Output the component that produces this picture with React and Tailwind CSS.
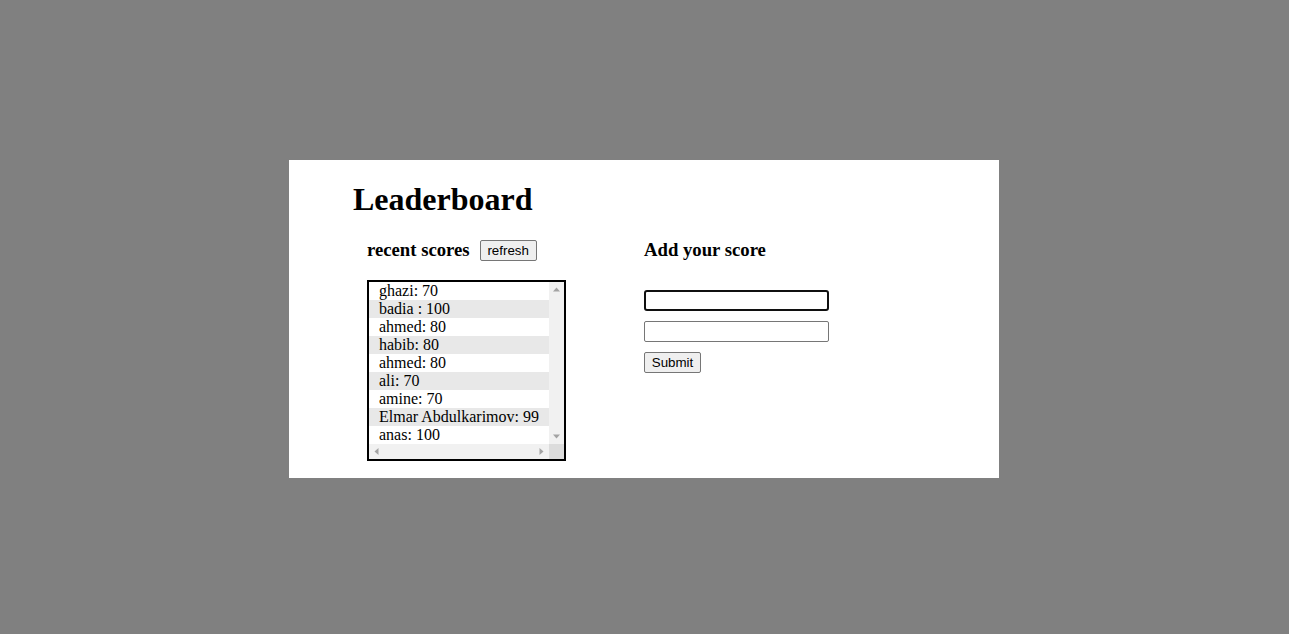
import React from 'react'

const SCORES = [
  { name: 'ghazi', score: 70 },
  { name: 'badia ', score: 100 },
  { name: 'ahmed', score: 80 },
  { name: 'habib', score: 80 },
  { name: 'ahmed', score: 80 },
  { name: 'ali', score: 70 },
  { name: 'amine', score: 70 },
  { name: 'Elmar Abdulkarimov', score: 99 },
  { name: 'anas', score: 100 }
]

// little grey scrollbar arrow, drawn in a 15x15 button
function Arrow({ dir }) {
  const pts = {
    up: '4,9.5 11,9.5 7.5,5.5',
    down: '4,5.5 11,5.5 7.5,9.5',
    left: '9.5,4 9.5,11 5.5,7.5',
    right: '5.5,4 5.5,11 9.5,7.5'
  }[dir]
  return (
    <svg width="15" height="15" viewBox="0 0 15 15" className="block shrink-0">
      <polygon points={pts} fill="#a3a3a3" />
    </svg>
  )
}

export default function App() {
  return (
    <div className="min-h-[634px] bg-[#808080] pt-[160px] font-['Liberation_Serif',serif] text-black">
      <div className="ml-[289px] w-[710px] h-[318px] bg-white pl-[64px] pt-[21px]">
        <h1 className="text-[32px] leading-[37px] font-bold">Leaderboard</h1>

        <div className="flex mt-[21px] pl-[14px]">
          {/* recent scores */}
          <div className="w-[277px] flex flex-col">
            <div className="flex items-start gap-[10px] h-[22px]">
              <h3 className="text-[18.72px] leading-[22px] font-bold">recent scores</h3>
              <button className="mt-[1px] w-[57px] h-[21px] border border-[#767676] rounded-[2px] bg-[#efefef] font-['Liberation_Sans',Arial,sans-serif] text-[13.33px] leading-[15px]">
                refresh
              </button>
            </div>
            <div className="mt-[19px] w-[199px] h-[181px] border-2 border-black grid grid-cols-[180px_15px] grid-rows-[162px_15px]">
              <div className="overflow-hidden">
                {SCORES.map((s, i) => (
                  <div
                    key={i}
                    className={`h-[18px] leading-[18px] text-[16px] pl-[10px] whitespace-nowrap ${i % 2 === 1 ? 'bg-[#e8e8e8]' : 'bg-white'}`}
                  >
                    {s.name}: {s.score}
                  </div>
                ))}
              </div>
              <div className="bg-[#f1f1f1] flex flex-col justify-between">
                <Arrow dir="up" />
                <Arrow dir="down" />
              </div>
              <div className="bg-[#f1f1f1] flex justify-between">
                <Arrow dir="left" />
                <Arrow dir="right" />
              </div>
              <div className="bg-[#dcdcdc]" />
            </div>
          </div>

          {/* add score form */}
          <div className="flex flex-col items-start">
            <h3 className="h-[22px] text-[18.72px] leading-[22px] font-bold">Add your score</h3>
            <input
              type="text"
              className="mt-[29px] w-[185px] h-[21px] border-2 border-[#101010] rounded-[3px] bg-white outline-none"
            />
            <input
              type="text"
              className="mt-[10px] w-[185px] h-[21px] border border-[#767676] rounded-[2px] bg-white outline-none"
            />
            <button className="mt-[10px] w-[57px] h-[21px] border border-[#767676] rounded-[2px] bg-[#efefef] font-['Liberation_Sans',Arial,sans-serif] text-[13.33px] leading-[15px]">
              Submit
            </button>
          </div>
        </div>
      </div>
    </div>
  )
}
